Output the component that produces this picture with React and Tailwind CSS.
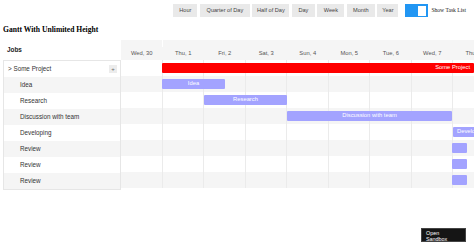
import React from "react";

const views = [
  { label: "Hour", w: "w-[24px]" },
  { label: "Quarter of Day", w: "w-[50px]" },
  { label: "Half of Day", w: "w-[37px]" },
  { label: "Day", w: "w-[23px]" },
  { label: "Week", w: "w-[27px]" },
  { label: "Month", w: "w-[28px]" },
  { label: "Year", w: "w-[21px]" },
];

const dates = ["Wed, 30", "Thu, 1", "Fri, 2", "Sat, 3", "Sun, 4", "Mon, 5", "Tue, 6", "Wed, 7", "Thu, 8"];

const rows = [
  { name: "> Some Project", project: true, bar: { left: 41, width: 312, color: "bg-[#ff0000]", label: "Some Project", align: "right" } },
  { name: "Idea", bar: { left: 41, width: 63, label: "Idea" } },
  { name: "Research", bar: { left: 83, width: 83, label: "Research" } },
  { name: "Discussion with team", bar: { left: 166, width: 165, label: "Discussion with team" } },
  { name: "Developing", bar: { left: 332, width: 80, label: "Developing", align: "left" } },
  { name: "Review", bar: { left: 331, width: 15, label: "" } },
  { name: "Review", bar: { left: 331, width: 15, label: "" } },
  { name: "Review", bar: { left: 331, width: 15, label: "" } },
];

export default function App() {
  return (
    <div className="relative w-[474px] h-[248px] overflow-hidden bg-white font-['Liberation_Sans',Arial,sans-serif]">
      {/* view switcher */}
      <div className="flex items-center justify-end pt-[4px] pr-[8px]">
        <div className="flex gap-[2.5px]">
          {views.map((v) => (
            <div
              key={v.label}
              className={`${v.w} h-[13px] flex items-center justify-center bg-[#e9e9e9] text-[#444] text-[5.6px] leading-none`}
            >
              {v.label}
            </div>
          ))}
        </div>
        <div className="ml-[7px] w-[23px] h-[13px] bg-[#2196f3] flex items-center justify-end pr-[2px]">
          <div className="w-[8px] h-[10px] bg-white" />
        </div>
        <div className="ml-[3px] font-['Liberation_Serif',serif] text-[5.6px] text-[#222] leading-none">
          Show Task List
        </div>
      </div>

      {/* title */}
      <div className="mt-[8px] ml-[3px] font-['Liberation_Serif',serif] font-bold text-[7.6px] leading-[10px] text-black">
        Gantt With Unlimited Height
      </div>

      {/* gantt */}
      <div className="mt-[5px] ml-[3px] flex">
        {/* task list */}
        <div className="w-[118px] shrink-0">
          <div className="h-[20px] flex items-center pl-[4px] font-bold text-[6.4px] text-[#222]">Jobs</div>
          <div className="border border-[#e6e6e6]">
            {rows.map((r, i) => (
              <div
                key={i}
                className={`h-[16px] flex items-center text-[6.3px] text-[#333] ${i % 2 === 1 ? "bg-[#f5f5f5]" : "bg-white"} ${r.project ? "pl-[4px]" : "pl-[16px]"}`}
              >
                <span className="flex-1">{r.name}</span>
                {r.project && (
                  <span className="mr-[3px] w-[8px] h-[8px] bg-[#ececec] flex items-center justify-center text-[6px] text-[#666] leading-none">
                    +
                  </span>
                )}
              </div>
            ))}
          </div>
        </div>

        {/* chart */}
        <div className="flex-1 overflow-hidden">
          <div className="w-[374px] bg-[#f5f5f5]">
            <div className="h-[7px] flex">
              <div className="w-[41.5px] border-r border-white" />
            </div>
            <div className="h-[13px] flex">
              {dates.map((d) => (
                <div key={d} className="w-[41.5px] shrink-0 flex items-center justify-center text-[5.8px] text-[#555]">
                  {d}
                </div>
              ))}
            </div>
          </div>
          <div className="relative w-[374px]">
            {rows.map((r, i) => (
              <div key={i} className={`relative h-[16px] flex ${i % 2 === 1 ? "bg-[#f5f5f5]" : "bg-white"}`}>
                {dates.map((d) => (
                  <div key={d} className="w-[41.5px] shrink-0 border-r border-[#ebebeb]" />
                ))}
                <div
                  className={`absolute top-[3px] h-[10px] rounded-[1px] flex items-center text-[5.8px] text-white leading-none whitespace-nowrap overflow-hidden ${r.bar.color || "bg-[#a3a3ff]"} ${
                    r.bar.align === "right" ? "justify-end pr-[4px]" : r.bar.align === "left" ? "justify-start pl-[4px]" : "justify-center"
                  }`}
                  style={{ left: r.bar.left, width: r.bar.width }}
                >
                  {r.bar.label}
                </div>
              </div>
            ))}
          </div>
        </div>
      </div>

      {/* open sandbox overlay */}
      <div className="absolute left-[421px] top-[228px] w-[45px] h-[14px] bg-[#151515] border border-[#444] text-white text-[5.4px] leading-[6px] pl-[4px] pt-[1px]">
        <div>Open</div>
        <div>Sandbox</div>
      </div>
    </div>
  );
}
